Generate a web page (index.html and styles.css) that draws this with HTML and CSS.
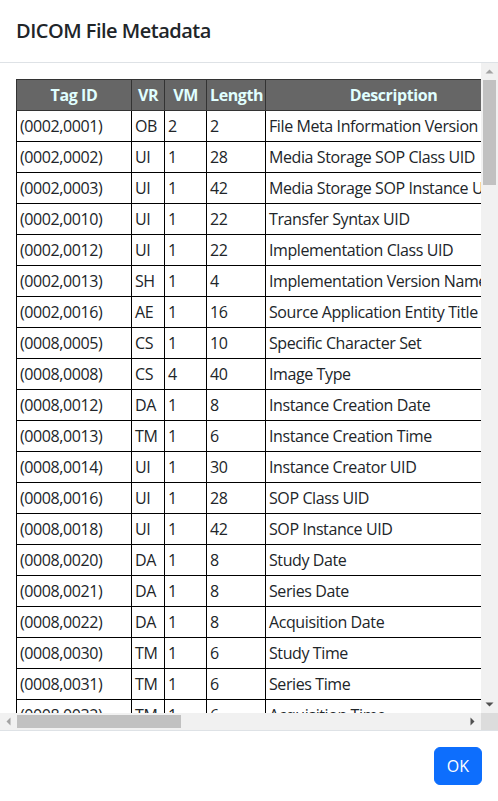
FILE: index.html
```html
<!DOCTYPE html>
<html lang="en">
<head>
<meta charset="utf-8">
<title>DICOM File Metadata</title>
<link rel="stylesheet" href="styles.css">
</head>
<body>
<div class="modal">
  <div class="modal-header">
    <h5 class="modal-title">DICOM File Metadata</h5>
  </div>
  <div class="modal-body">
    <div class="viewport">
    <table class="meta">
      <colgroup>
        <col class="c-tag"><col class="c-vr"><col class="c-vm"><col class="c-len"><col class="c-desc"><col class="c-val">
      </colgroup>
      <thead>
        <tr><th>Tag ID</th><th>VR</th><th>VM</th><th>Length</th><th>Description</th><th>Value</th></tr>
      </thead>
      <tbody>
        <tr><td>(0002,0001)</td><td>OB</td><td>2</td><td>2</td><td>File Meta Information Version</td><td>00 01</td></tr>
        <tr><td>(0002,0002)</td><td>UI</td><td>1</td><td>28</td><td>Media Storage SOP Class UID</td><td>1.2.840.10008.5.1.4.1.1.2</td></tr>
        <tr><td>(0002,0003)</td><td>UI</td><td>1</td><td>42</td><td>Media Storage SOP Instance UID</td><td>1.3.6.1.4.1.5962.1.1.1.1.1.20040119072730.12322</td></tr>
        <tr><td>(0002,0010)</td><td>UI</td><td>1</td><td>22</td><td>Transfer Syntax UID</td><td>1.2.840.10008.1.2.1</td></tr>
        <tr><td>(0002,0012)</td><td>UI</td><td>1</td><td>22</td><td>Implementation Class UID</td><td>1.3.6.1.4.1.5962.2</td></tr>
        <tr><td>(0002,0013)</td><td>SH</td><td>1</td><td>4</td><td>Implementation Version Name</td><td>DCTK</td></tr>
        <tr><td>(0002,0016)</td><td>AE</td><td>1</td><td>16</td><td>Source Application Entity Title</td><td>CLUNIE1</td></tr>
        <tr><td>(0008,0005)</td><td>CS</td><td>1</td><td>10</td><td>Specific Character Set</td><td>ISO_IR 100</td></tr>
        <tr><td>(0008,0008)</td><td>CS</td><td>4</td><td>40</td><td>Image Type</td><td>ORIGINAL\PRIMARY\AXIAL</td></tr>
        <tr><td>(0008,0012)</td><td>DA</td><td>1</td><td>8</td><td>Instance Creation Date</td><td>20040119</td></tr>
        <tr><td>(0008,0013)</td><td>TM</td><td>1</td><td>6</td><td>Instance Creation Time</td><td>072731</td></tr>
        <tr><td>(0008,0014)</td><td>UI</td><td>1</td><td>30</td><td>Instance Creator UID</td><td>1.3.6.1.4.1.5962.3</td></tr>
        <tr><td>(0008,0016)</td><td>UI</td><td>1</td><td>28</td><td>SOP Class UID</td><td>1.2.840.10008.5.1.4.1.1.2</td></tr>
        <tr><td>(0008,0018)</td><td>UI</td><td>1</td><td>42</td><td>SOP Instance UID</td><td>1.3.6.1.4.1.5962.1.1.1.1.1.20040119072730.12322</td></tr>
        <tr><td>(0008,0020)</td><td>DA</td><td>1</td><td>8</td><td>Study Date</td><td>20010118</td></tr>
        <tr><td>(0008,0021)</td><td>DA</td><td>1</td><td>8</td><td>Series Date</td><td>19970430</td></tr>
        <tr><td>(0008,0022)</td><td>DA</td><td>1</td><td>8</td><td>Acquisition Date</td><td>19970430</td></tr>
        <tr><td>(0008,0030)</td><td>TM</td><td>1</td><td>6</td><td>Study Time</td><td>103000</td></tr>
        <tr><td>(0008,0031)</td><td>TM</td><td>1</td><td>6</td><td>Series Time</td><td>112749</td></tr>
        <tr><td>(0008,0032)</td><td>TM</td><td>1</td><td>6</td><td>Acquisition Time</td><td>112936</td></tr>
        <tr><td>(0008,0033)</td><td>TM</td><td>1</td><td>6</td><td>Content Time</td><td>113008</td></tr>
        <tr><td>(0008,0050)</td><td>SH</td><td>1</td><td>4</td><td>Accession Number</td><td>0000</td></tr>
        <tr><td>(0008,0060)</td><td>CS</td><td>1</td><td>2</td><td>Modality</td><td>CT</td></tr>
      </tbody>
    </table>
    </div>
    <div class="vbar">
      <div class="sb-btn"><svg width="17" height="17" viewBox="0 0 17 17"><polygon points="4.5,10.5 12.5,10.5 8.5,6.5" fill="#a3a3a3"/></svg></div>
      <div class="vtrack"><div class="vthumb"></div></div>
      <div class="sb-btn"><svg width="17" height="17" viewBox="0 0 17 17"><polygon points="4.5,6.5 12.5,6.5 8.5,10.5" fill="#505050"/></svg></div>
    </div>
    <div class="hbar">
      <div class="sb-btn"><svg width="17" height="17" viewBox="0 0 17 17"><polygon points="10.5,4.5 10.5,12.5 6.5,8.5" fill="#a3a3a3"/></svg></div>
      <div class="htrack"><div class="hthumb"></div></div>
      <div class="sb-btn"><svg width="17" height="17" viewBox="0 0 17 17"><polygon points="6.5,4.5 6.5,12.5 10.5,8.5" fill="#505050"/></svg></div>
    </div>
    <div class="corner"></div>
  </div>
  <div class="modal-footer">
    <button type="button" class="btn-ok">OK</button>
  </div>
</div>
</body>
</html>
```

FILE: styles.css
```css
html, body {
  margin: 0;
  padding: 0;
  height: 100%;
  background: #fff;
}
body {
  font-family: "Open Sans", "Noto Sans", "DejaVu Sans", sans-serif;
  font-size: 16px;
  line-height: 1.5;
  color: #212529;
}
.modal {
  display: flex;
  flex-direction: column;
  height: 801px;
  width: 498px;
  box-sizing: border-box;
}
.modal-header {
  padding: 16px;
  border-bottom: 1px solid #dee2e6;
  flex: none;
}
.modal-title {
  margin: 0;
  font-size: 20px;
  font-weight: 600;
  line-height: 30px;
  letter-spacing: -0.5px;
}
.modal-body {
  flex: 1 1 auto;
  min-height: 0;
  display: grid;
  grid-template-columns: 1fr 17px;
  grid-template-rows: 1fr 17px;
}
.viewport {
  overflow: hidden;
  padding: 16px 0 0 16px;
  min-width: 0;
  min-height: 0;
}
.vbar {
  display: flex;
  flex-direction: column;
  background: #f1f1f1;
}
.hbar {
  display: flex;
  background: #f1f1f1;
}
.sb-btn {
  flex: none;
  width: 17px;
  height: 17px;
  display: flex;
}
.vtrack {
  flex: 1;
  padding: 0 2px;
}
.vthumb {
  height: 105px;
  background: #c1c1c1;
}
.htrack {
  flex: 1;
  padding: 2px 0;
}
.hthumb {
  width: 164px;
  height: 100%;
  background: #c1c1c1;
}
.corner {
  background: #dcdcdc;
}
.meta {
  border-collapse: collapse;
  table-layout: fixed;
  width: 1292px;
  letter-spacing: -0.4px;
}
.c-tag { width: 115px; }
.c-vr { width: 33px; }
.c-vm { width: 42px; }
.c-len { width: 59px; }
.c-desc { width: 256px; }
.meta th, .meta td {
  border: 1px solid #000;
  padding: 3px;
  white-space: nowrap;
  overflow: hidden;
  text-align: left;
}
.meta th {
  background: #666;
  color: #e0ffff;
  font-weight: 700;
  text-align: center;
  border-color: #333;
}
.modal-footer {
  flex: none;
  border-top: 1px solid #dee2e6;
  padding: 12px;
  display: flex;
  justify-content: flex-end;
}
.btn-ok {
  margin: 4px;
  font-family: inherit;
  font-size: 16px;
  line-height: 24px;
  padding: 6px 12px;
  color: #fff;
  background: #0d6efd;
  border: 1px solid #0d6efd;
  border-radius: 6px;
}
```
